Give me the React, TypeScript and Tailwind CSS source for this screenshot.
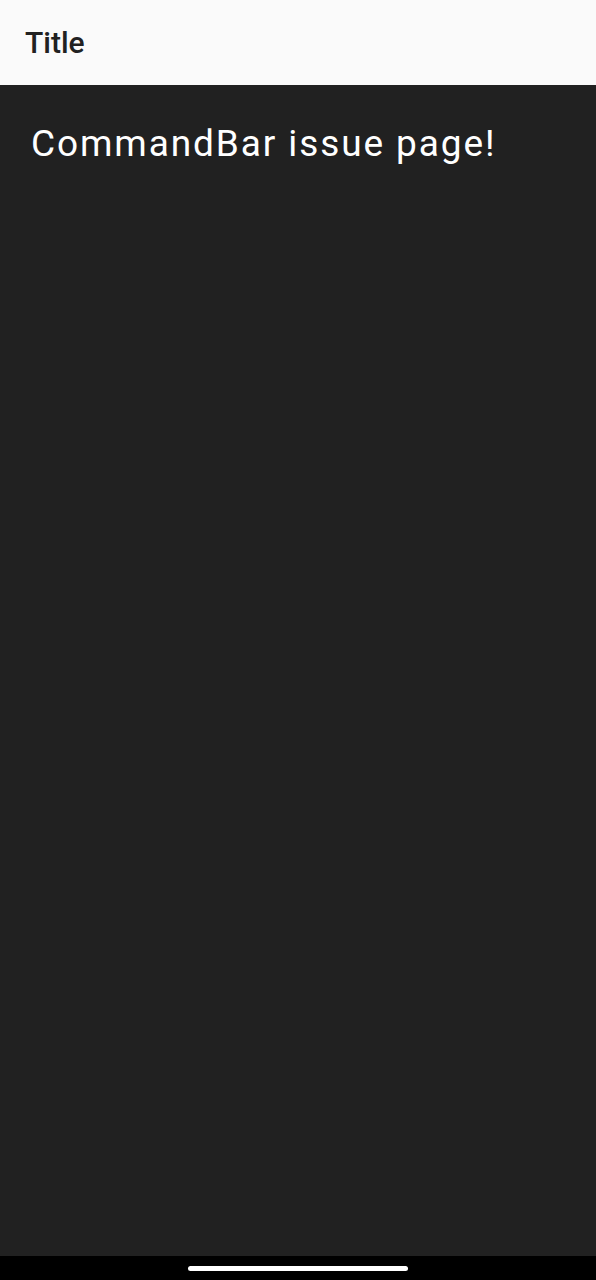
export default function App() {
  return (
    <div className="flex h-[1280px] w-[596px] flex-col bg-[#212121]" style={{ fontFamily: "Roboto, 'Noto Sans', sans-serif" }}>
      <header className="flex h-[85px] shrink-0 items-center bg-[#fafafa] pl-[25px]">
        <span className="text-[30px] font-medium leading-none text-[#212121]">Title</span>
      </header>
      <main className="flex-1 px-[31px] pt-[37px]">
        <p className="text-[37px] leading-[43px] tracking-[1.9px] text-white">CommandBar issue page!</p>
      </main>
      <div className="flex h-[24px] shrink-0 items-center justify-center bg-black">
        <div className="h-[5px] w-[220px] rounded-full bg-white" />
      </div>
    </div>
  );
}
